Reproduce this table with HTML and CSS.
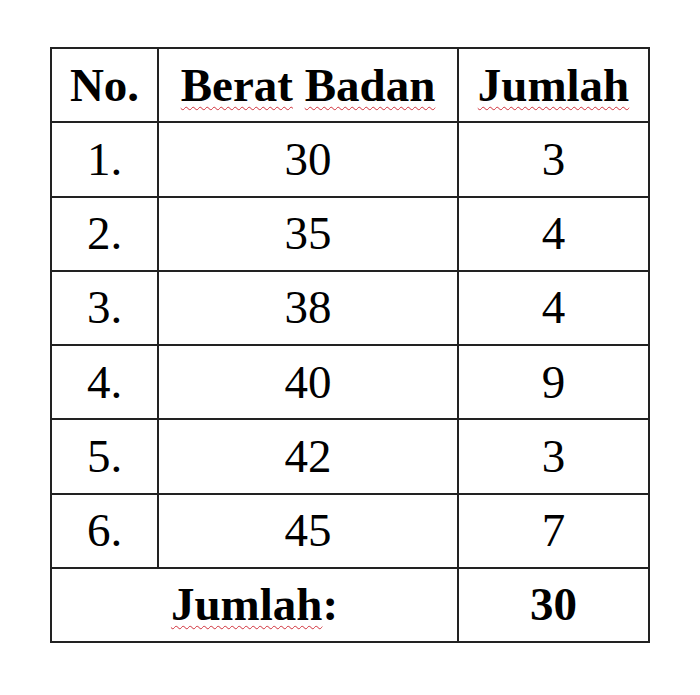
FILE: index.html
```html
<!DOCTYPE html>
<html>
<head>
<meta charset="utf-8">
<link rel="stylesheet" href="styles.css">
</head>
<body>
<table class="data">
  <colgroup>
    <col class="c1"><col class="c2"><col class="c3">
  </colgroup>
  <thead>
    <tr>
      <th>No.</th>
      <th><span class="sp">Berat</span> <span class="sp">Badan</span></th>
      <th><span class="sp">Jumlah</span></th>
    </tr>
  </thead>
  <tbody>
    <tr><td>1.</td><td>30</td><td>3</td></tr>
    <tr><td>2.</td><td>35</td><td>4</td></tr>
    <tr><td>3.</td><td>38</td><td>4</td></tr>
    <tr><td>4.</td><td>40</td><td>9</td></tr>
    <tr><td>5.</td><td>42</td><td>3</td></tr>
    <tr><td>6.</td><td>45</td><td>7</td></tr>
    <tr class="total"><td colspan="2"><span class="sp">Jumlah</span>:</td><td>30</td></tr>
  </tbody>
</table>
</body>
</html>
```

FILE: styles.css
```css
html, body {
  margin: 0;
  padding: 0;
  background: #ffffff;
}

.data {
  margin: 47px 0 0 50px;
  border-collapse: collapse;
  table-layout: fixed;
  width: 598px;
  font-family: "Liberation Serif", "Times New Roman", serif;
  font-size: 47px;
  color: #000000;
}

.c1 { width: 107px; }
.c2 { width: 300px; }
.c3 { width: 191px; }

.data th,
.data td {
  border: 2px solid #222222;
  height: 74.25px;
  padding: 0;
  text-align: center;
  vertical-align: middle;
  line-height: 1;
  box-sizing: border-box;
}

.data th {
  font-weight: bold;
}

.total td {
  font-weight: bold;
}

.sp {
  text-decoration: underline wavy #d0303a;
  text-decoration-thickness: 1px;
  text-underline-offset: 5px;
}
```
